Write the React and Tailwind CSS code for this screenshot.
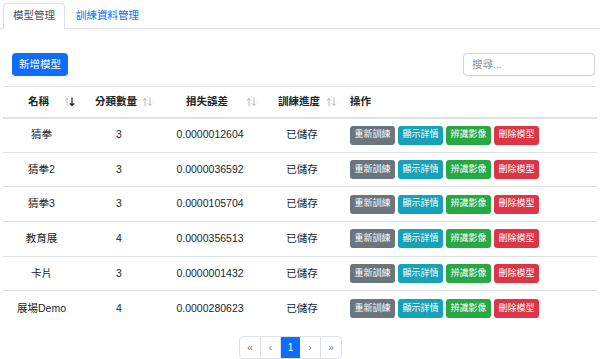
import React from 'react';

const rows = [
  { name: '猜拳', classes: 3, loss: '0.0000012604', status: '已儲存' },
  { name: '猜拳2', classes: 3, loss: '0.0000036592', status: '已儲存' },
  { name: '猜拳3', classes: 3, loss: '0.0000105704', status: '已儲存' },
  { name: '教育展', classes: 4, loss: '0.0000356513', status: '已儲存' },
  { name: '卡片', classes: 3, loss: '0.0000001432', status: '已儲存' },
  { name: '展場Demo', classes: 4, loss: '0.0000280623', status: '已儲存' },
];

function SortIcon({ active }) {
  return (
    <svg width="11" height="10" viewBox="0 0 11 10" fill="none" strokeLinecap="round" strokeLinejoin="round">
      <g stroke={active ? '#c4c8cc' : '#b9bec3'} strokeWidth="1">
        <path d="M3 9V1.5M1.2 3.3L3 1.5L4.8 3.3" />
      </g>
      <g stroke={active ? '#212529' : '#b9bec3'} strokeWidth={active ? 1.3 : 1}>
        <path d="M8 1V8.5M6.2 6.7L8 8.5L9.8 6.7" />
      </g>
    </svg>
  );
}

function HeadCell({ label, active }) {
  return (
    <th className="relative h-[31px] p-0 font-bold border-b-2 border-[#dee2e6]">
      <div className="pr-[6px] text-center">{label}</div>
      <span className="absolute right-[5px] top-[10px] flex">
        <SortIcon active={active} />
      </span>
    </th>
  );
}

const btn = 'h-[19px] w-[45px] rounded-[3px] text-white text-[9px] flex items-center justify-center';

export default function App() {
  return (
    <div className="w-[600px] h-[359px] overflow-hidden bg-white text-[#212529] font-['Liberation_Sans','Noto_Sans_CJK_TC',sans-serif]">
      {/* Tabs */}
      <div className="flex h-[29px] pt-[3px] pl-[3px] border-b border-[#dee2e6]">
        <div className="-mb-px h-[26px] px-[9px] flex items-center bg-white border border-[#dee2e6] border-b-white rounded-t-[4px] text-[10.5px] text-[#495057]">
          模型管理
        </div>
        <div className="h-[26px] px-[11px] flex items-center text-[10.5px] text-[#0d6efd]">訓練資料管理</div>
      </div>

      {/* Toolbar */}
      <div className="flex items-center justify-between mt-[24px] pl-[12px] pr-[5px]">
        <button className="h-[23px] px-[7px] rounded-[4px] bg-[#0d6efd] text-white text-[10.5px]">新增模型</button>
        <div className="w-[132px] h-[23px] rounded-[4px] border border-[#ced4da] pl-[8px] flex items-center text-[10.5px] text-[#8a9097]">
          搜尋...
        </div>
      </div>

      {/* Table */}
      <div className="mt-[10px] px-[3px]">
        <table className="w-full table-fixed border-collapse text-[10.5px]">
          <colgroup>
            <col className="w-[77px]" />
            <col className="w-[78px]" />
            <col className="w-[104px]" />
            <col className="w-[80px]" />
            <col />
          </colgroup>
          <thead>
            <tr className="border-t border-[#dee2e6]">
              <HeadCell label="名稱" active />
              <HeadCell label="分類數量" />
              <HeadCell label="損失誤差" />
              <HeadCell label="訓練進度" />
              <th className="h-[31px] p-0 pl-[8px] font-bold text-left border-b-2 border-[#dee2e6]">操作</th>
            </tr>
          </thead>
          <tbody>
            {rows.map((r, i) => (
              <tr key={r.name} className={i < rows.length - 1 ? 'border-b border-[#dee2e6]' : ''}>
                <td className="h-[34.7px] p-0 text-center">{r.name}</td>
                <td className="p-0 text-center">{r.classes}</td>
                <td className="p-0 text-center">{r.loss}</td>
                <td className="p-0 text-center">{r.status}</td>
                <td className="p-0 pl-[8px]">
                  <div className="flex gap-[3px]">
                    <button className={`${btn} bg-[#6c757d]`}>重新訓練</button>
                    <button className={`${btn} bg-[#17a2b8]`}>顯示詳情</button>
                    <button className={`${btn} bg-[#28a745]`}>辨識影像</button>
                    <button className={`${btn} bg-[#dc3545]`}>刪除模型</button>
                  </div>
                </td>
              </tr>
            ))}
          </tbody>
        </table>
      </div>

      {/* Pagination */}
      <div className="flex justify-center mt-[10px] pr-[19px]">
        <div className="flex h-[23px] border border-[#dee2e6] rounded-[4px] overflow-hidden text-[10px] text-[#6c757d]">
          <span className="w-[21px] flex items-center justify-center border-r border-[#dee2e6]">«</span>
          <span className="w-[20px] flex items-center justify-center border-r border-[#dee2e6]">‹</span>
          <span className="w-[19px] flex items-center justify-center bg-[#0d6efd] text-white">1</span>
          <span className="w-[21px] flex items-center justify-center border-r border-[#dee2e6]">›</span>
          <span className="w-[20px] flex items-center justify-center">»</span>
        </div>
      </div>
    </div>
  );
}
